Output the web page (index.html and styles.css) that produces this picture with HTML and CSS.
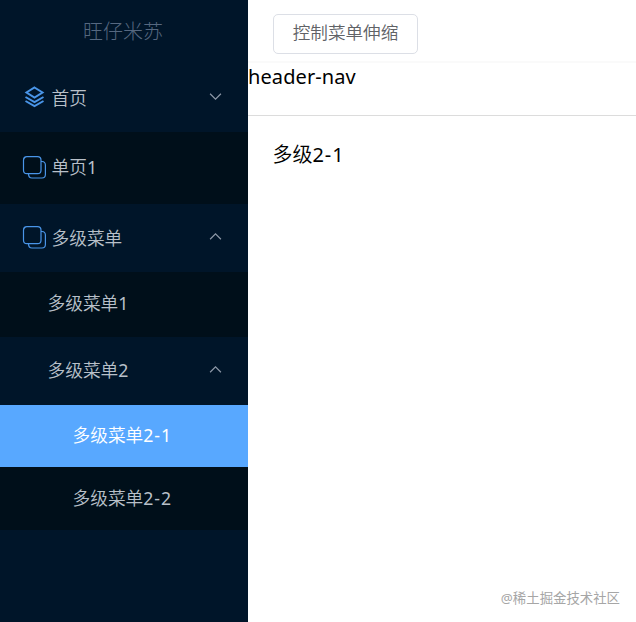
FILE: index.html
```html
<!DOCTYPE html>
<html lang="zh-CN">
<head>
<meta charset="utf-8">
<title>旺仔米苏</title>
<link rel="stylesheet" href="styles.css">
</head>
<body>
<div class="layout">
  <aside class="sidebar">
    <div class="brand">旺仔米苏</div>
    <nav class="menu">
      <div class="item item-home">
        <svg class="icon" viewBox="0 0 24 24"><path class="bold" d="M12.5 2.5 20.5 7.5 12.5 12.5 4.5 7.5ZM3.5 12 12.5 17 21.5 12M3.5 16 12.5 21 21.5 16"/></svg>
        <span>首页</span>
        <svg class="arrow" viewBox="0 0 12 8"><path d="M1 1.5 6 6.5 11 1.5"/></svg>
      </div>
      <div class="item item-single dark">
        <svg class="icon" viewBox="0 0 24 24"><rect x="1.5" y=".7" width="17.5" height="17" rx="3.5"/><path d="M19 5.5H20Q23.4 5.7 23.4 9V18.5Q23.4 22 20 22H10Q6.5 22 6.5 17.7"/></svg>
        <span>单页<b>1</b></span>
      </div>
      <div class="item item-multi">
        <svg class="icon" viewBox="0 0 24 24"><rect x="1.5" y=".7" width="17.5" height="17" rx="3.5"/><path d="M19 5.5H20Q23.4 5.7 23.4 9V18.5Q23.4 22 20 22H10Q6.5 22 6.5 17.7"/></svg>
        <span>多级菜单</span>
        <svg class="arrow" viewBox="0 0 12 8"><path d="M1 6.5 6 1.5 11 6.5"/></svg>
      </div>
      <div class="item level-2 item-first dark"><span>多级菜单<b>1</b></span></div>
      <div class="item level-2 item-second">
        <span>多级菜单<b>2</b></span>
        <svg class="arrow" viewBox="0 0 12 8"><path d="M1 6.5 6 1.5 11 6.5"/></svg>
      </div>
      <div class="item level-3 active"><span>多级菜单<b>2-1</b></span></div>
      <div class="item level-3 dark"><span>多级菜单<b>2-2</b></span></div>
    </nav>
  </aside>
  <main class="main">
    <header class="toolbar"><button class="toggle">控制菜单伸缩</button></header>
    <div class="header-nav">header-nav</div>
    <section class="content">多级<b>2-1</b></section>
    <footer class="credit">@稀土掘金技术社区</footer>
  </main>
</div>
</body>
</html>
```
FILE: styles.css
```css
* { box-sizing: border-box; }
body {
  margin: 0;
  font-family: "Noto Sans", "Noto Sans CJK SC", sans-serif;
  font-size: 20px;
  color: #000;
  background: #fff;
}
b { font-weight: 400; letter-spacing: 0.9px; }
.layout { display: flex; height: 622px; overflow: hidden; }
.sidebar { width: 248px; flex: none; background: #001529; }
.brand {
  height: 62px;
  padding-right: 2px;
  line-height: 63px;
  text-align: center;
  font-weight: 300;
  color: #566880;
}
.item {
  display: flex;
  align-items: center;
  height: 63px;
  padding: 0 26px 2px 22px;
  font-size: 17.7px;
  line-height: 26px;
  font-weight: 350;
  color: #b8c0c9;
  white-space: nowrap;
}
.dark { background: #000f1a; }
.icon { width: 24px; height: 24px; margin-right: 5.5px; flex: none; }
.icon path, .icon rect { fill: none; stroke: #4995e8; stroke-width: 1.2; }
.icon .bold { stroke-width: 2; }
.arrow { width: 13px; height: 9px; margin: -2px 0 0 auto; }
.arrow path { fill: none; stroke: #8d99a8; stroke-width: 1.1; }
.item-home { height: 70px; padding-bottom: 0; }
.item-home span, .item-multi span { padding-top: 1px; }
.item-single { height: 72px; }
.item-single .icon { margin-top: 2px; }
.item-multi { height: 68px; padding-bottom: 1px; }
.item-first { height: 65px; padding-bottom: 4px; }
.item-second { height: 68px; }
.level-2 { padding-left: 47.5px; }
.level-3 { padding-left: 72.5px; }
.active { height: 62px; background: #58a8ff; color: #fff; }
.main { flex: 1; min-width: 0; display: flex; flex-direction: column; }
.toolbar {
  height: 63px;
  flex: none;
  padding: 14px 25px 0;
  border-bottom: 2px solid #fafafa;
}
.toggle {
  display: block;
  width: 145px;
  height: 40px;
  padding: 0 0 4px;
  border: 1px solid #dcdfe6;
  border-radius: 5px;
  background: #fff;
  color: #606266;
  font: 350 17.6px/26px "Noto Sans", "Noto Sans CJK SC", sans-serif;
}
.header-nav { height: 53px; flex: none; line-height: 27px; letter-spacing: 0.1px; border-bottom: 1px solid #dcdcdc; }
.content { flex: 1; padding: 25px 24.5px; line-height: 28px; font-weight: 350; }
.credit {
  padding: 0 16px 14px;
  text-align: right;
  font-size: 13.4px;
  line-height: 20px;
  color: #a6a6a6;
}
```
